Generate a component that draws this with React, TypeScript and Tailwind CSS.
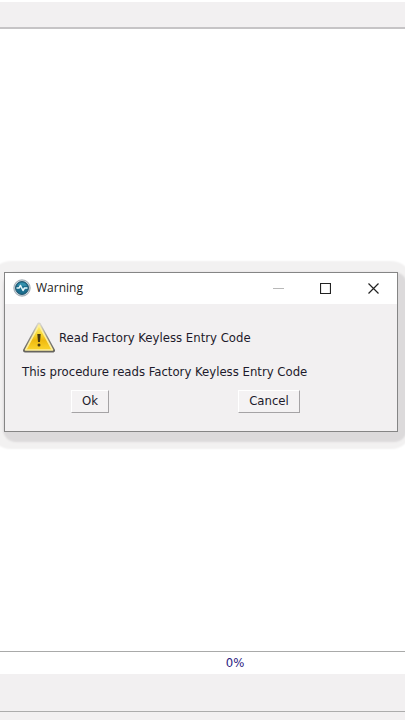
import React from "react";

function AppIcon() {
  return (
    <svg width="18" height="18" viewBox="0 0 18 18" aria-hidden="true">
      <circle cx="9" cy="9" r="8.2" fill="#c9d3da" stroke="#8e9aa3" strokeWidth="0.8" />
      <circle cx="9" cy="9" r="6.4" fill="#1c6f8f" stroke="#164e68" strokeWidth="1" />
      <path d="M4 6.5a5.6 5.6 0 0 1 10 0q-5 1.500-10 0z" fill="#3d9cb8" opacity="0.7" />
      <path d="M3.500 9h2.500l1.500-2.500 2.500 5 1.500-2.500h3" fill="none" stroke="#e8f8fc" strokeWidth="1.500" strokeLinejoin="round" />
    </svg>
  );
}

function WarningIcon() {
  return (
    <svg width="34" height="32" viewBox="0 0 34 32" aria-hidden="true">
      <defs>
        <linearGradient id="rim" x1="0" y1="0" x2="0" y2="1">
          <stop offset="0" stopColor="#d6d4cc" />
          <stop offset="0.500" stopColor="#8d8b86" />
          <stop offset="1" stopColor="#66645f" />
        </linearGradient>
        <linearGradient id="face" x1="0" y1="0" x2="0" y2="1">
          <stop offset="0" stopColor="#fff07a" />
          <stop offset="0.400" stopColor="#f7d52e" />
          <stop offset="0.600" stopColor="#efb90f" />
          <stop offset="1" stopColor="#fbd42c" />
        </linearGradient>
      </defs>
      <path d="M17 2.500L31 28.500h-28z" fill="url(#rim)" stroke="url(#rim)" strokeWidth="4" strokeLinejoin="round" />
      <path d="M17 3L30.500 28h-27z" fill="url(#face)" stroke="#fdee9a" strokeWidth="1.600" strokeLinejoin="round" />
      <path d="M15.300 12h3.400l-.7 8h-2z" fill="#4a3a10" />
      <circle cx="17" cy="23" r="1.500" fill="#4a3a10" />
    </svg>
  );
}

function TitleBar() {
  return (
    <header className="flex h-[31px] items-center bg-white pl-2">
      <AppIcon />
      <h1 className="ml-[5px] flex-1 font-['Open_Sans','Noto_Sans',sans-serif] text-[12px] leading-4 text-[#222222]">
        Warning
      </h1>
      <button type="button" aria-label="Minimize" disabled className="flex h-full w-[47px] items-center justify-center">
        <svg width="11" height="11" viewBox="0 0 11 11">
          <path d="M0 5.500h11" stroke="#b8b8b8" />
        </svg>
      </button>
      <button type="button" aria-label="Maximize" className="flex h-full w-[47px] items-center justify-center">
        <svg width="11" height="11" viewBox="0 0 11 11">
          <path d="M.5 .5h10v10h-10z" fill="none" stroke="#222222" strokeWidth="1.200" />
        </svg>
      </button>
      <button type="button" aria-label="Close" className="flex h-full w-[48px] items-center justify-center">
        <svg width="11" height="11" viewBox="0 0 11 11">
          <path d="M.5 .5l10 10M10.500 .5l-10 10" fill="none" stroke="#222222" strokeWidth="1.200" />
        </svg>
      </button>
    </header>
  );
}

function DialogButton({ children }: { children: React.ReactNode }) {
  return (
    <button
      type="button"
      className="h-[23px] border border-t-white border-l-white border-r-[#a5a3a5] border-b-[#a5a3a5] bg-[#f4f2f3] px-2.5 leading-4"
    >
      {children}
    </button>
  );
}

function WarningDialog() {
  return (
    <div className="w-full rounded-lg shadow-[4px_5px_2px_5px_#dcdadb,0_3px_2px_14px_#f2f1f1]">
      <section role="dialog" aria-label="Warning" className="border border-[#858585] bg-[#f2f0f1]">
        <TitleBar />
        <div className="px-[17px] py-[18px]">
          <div className="flex items-center gap-[3px]">
            <WarningIcon />
            <p className="leading-4">Read Factory Keyless Entry Code</p>
          </div>
          <p className="mt-[10px] leading-4">This procedure reads Factory Keyless Entry Code</p>
          <div className="mt-[10px] grid grid-cols-[136px_1fr]">
            <div className="flex justify-center">
              <DialogButton>Ok</DialogButton>
            </div>
            <div className="flex justify-center">
              <DialogButton>Cancel</DialogButton>
            </div>
          </div>
        </div>
      </section>
    </div>
  );
}

export default function App() {
  return (
    <div className="flex min-h-screen flex-col overflow-hidden bg-white font-['DejaVu_Sans_Condensed','DejaVu_Sans',sans-serif] text-[13px] text-[#1d1a2b]">
      <div className="mt-0.5 h-[27px] border-b-2 border-[#c6c4c6] bg-[#f2f0f1]" />
      <main className="flex flex-1 items-center pt-[23px] pr-[7px] pl-1">
        <WarningDialog />
      </main>
      <div className="flex h-[23px] items-center justify-center border-t border-[#a9aaa9] bg-white pl-[65px] leading-4 text-[#2b2080]">
        0%
      </div>
      <footer className="bg-[#f2f0f1]">
        <div className="h-[38px] border-b border-[#acacac]" />
        <div className="h-2" />
      </footer>
    </div>
  );
}
